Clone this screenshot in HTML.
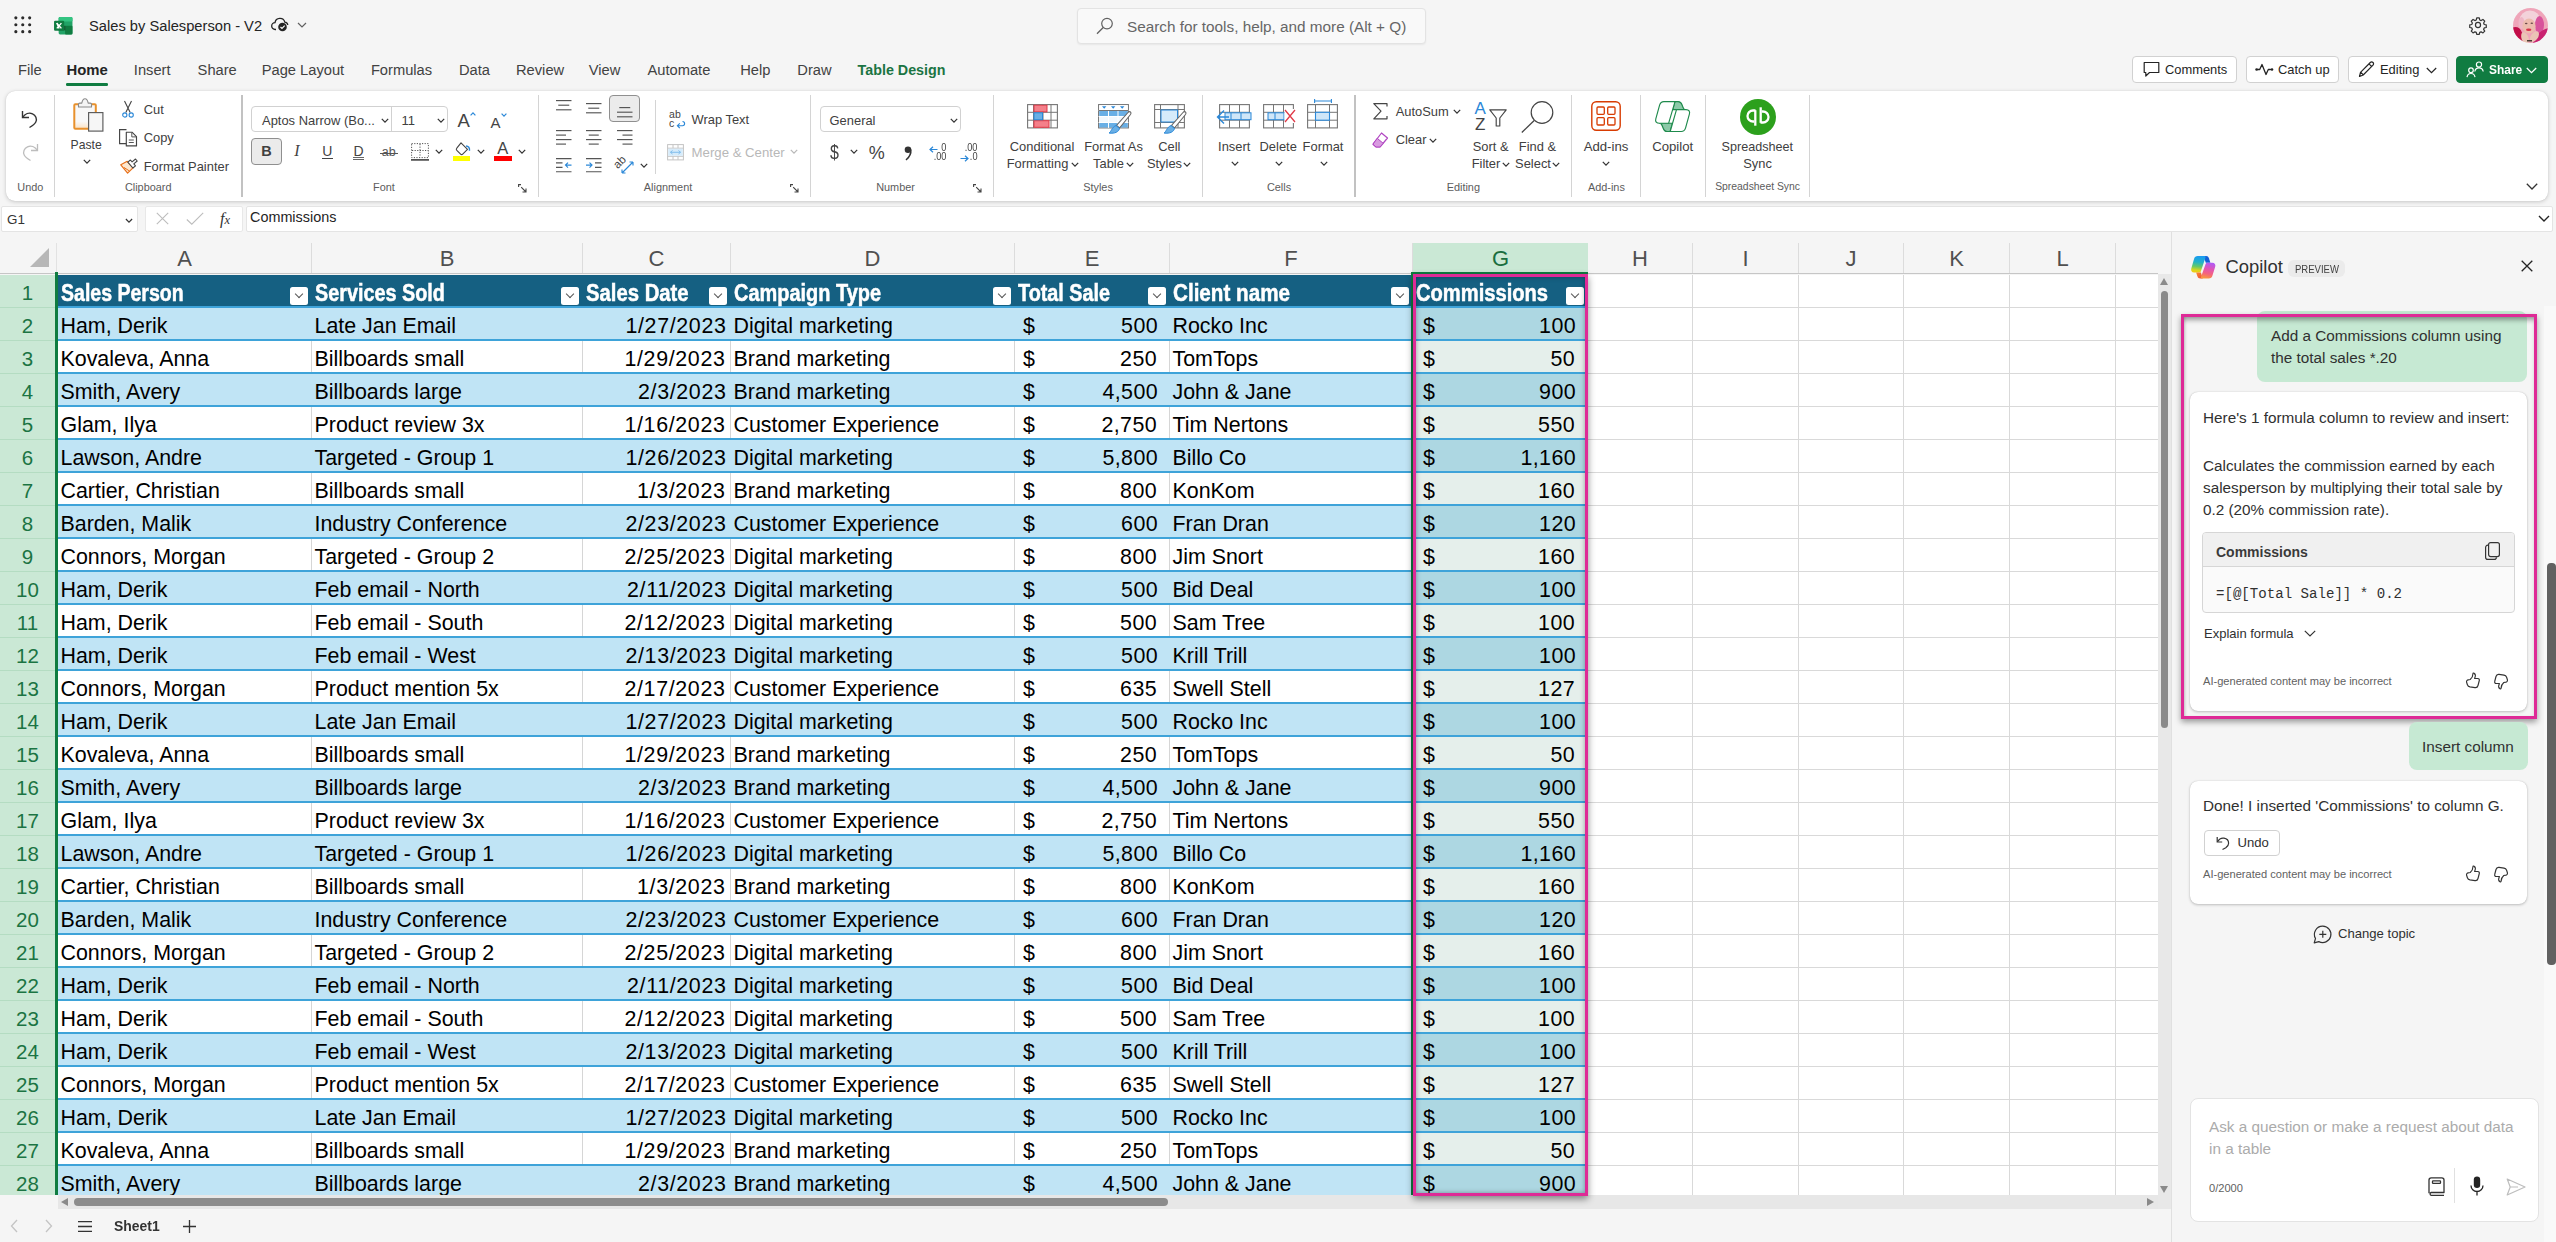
<!DOCTYPE html>
<html><head><meta charset="utf-8"><title>Sales by Salesperson - V2</title>
<style>
*{box-sizing:border-box;margin:0;padding:0}
html,body{width:2556px;height:1242px;overflow:hidden;background:#f5f5f5;font-family:"Liberation Sans",sans-serif;color:#242424}
body{position:relative}
.abs{position:absolute}
svg{display:block;overflow:visible}
/* ---------- grid ---------- */
#grid{position:absolute;left:0;top:243px;width:2172px;height:952px;overflow:hidden}
.colhdr{position:absolute;left:0;top:0;width:2158px;height:31px;border-bottom:1px solid #c6c6c6;background:#f5f5f5}
.ch{position:absolute;top:0;height:30px;line-height:32px;text-align:center;font-size:22px;color:#505050;border-right:1px solid #dcdcdc}
.ch.sel{background:#cae8d5;color:#1a6e3f;border-right:0;border-bottom:2px solid #107c41;height:31px}
.corner{position:absolute;left:30px;top:5px;width:0;height:0;border-left:19px solid transparent;border-bottom:19px solid #b7b7b7}
.corner:after{content:"";position:absolute;left:7px;top:-8px;width:1px;height:33px;background:#e2e2e2}
.rowhdr{position:absolute;left:0;top:32px;width:58px;height:920px;background:#cae8d5}
.rowhdr:after{content:"";position:absolute;left:55px;top:-3px;width:3px;height:923px;background:#107c41}
.rh{position:absolute;left:0;width:55px;height:33px;line-height:36px;text-align:center;font-size:20.500px;color:#1b7443;border-bottom:1px solid #b4dcc2}
.sheet{position:absolute;left:58px;top:32px;width:2100px;height:920px;background:#fff}
.hl{position:absolute;left:1530px;width:570px;height:1px;background:#d9d9d9}
.vl{position:absolute;top:0;width:1px;height:920px;background:#d9d9d9}
.th{position:absolute;top:0;height:33px;background:#156082;border-bottom:2px solid #3ea3d9;color:#fff;font-weight:bold;font-size:23.5px;line-height:36px;padding-left:2.500px;white-space:nowrap}
.th span{display:inline-block;-webkit-text-stroke:.5px #fff;transform-origin:0 50%}
.fb{position:absolute;right:4px;top:11.500px;width:18px;height:18px;background:#fff;border-radius:2.500px}
.fb:after{content:"";position:absolute;left:6.200px;top:4.300px;width:5px;height:5px;border-right:1.200px solid #555;border-bottom:1.200px solid #555;transform:rotate(45deg)}
.tr{position:absolute;left:0;width:1530px;height:33px;border-bottom:2px solid #3ea3d9}
.tr.b{background:#c0e4f5}
.tr.w{background:#fff}
.td{position:absolute;top:0;height:31px;line-height:36px;font-size:21.4px;color:#000;padding:0 4px 0 2.500px;white-space:nowrap;overflow:hidden}
.tr.w .td{border-right:1px solid #d6d6d6}
.td.r{text-align:right;padding-right:4.500px;letter-spacing:.65px !important}
.td.cur{text-align:right;padding-right:12px}
.td.cur em{font-style:normal;position:absolute;left:8px;top:0}
.td.r,.td.cur span{letter-spacing:.4px}
/* selection on G */
.gsel{position:absolute;left:1353px;top:-3px;width:2px;height:925px;background:#107c41}
.pinkcol{position:absolute;left:1413px;top:274px;width:175px;height:922px;border:3px solid #de2a96;box-shadow:0 3px 7px rgba(0,0,0,.45), inset 0 0 5px rgba(0,0,0,.35)}
.tr .td.g{background:rgba(40,120,90,.12)}
.td.g em{left:10px !important}
</style></head><body>
<!-- titlebar -->
<div class="abs" style="left:0;top:0;width:2556px;height:50px">
 <svg class="abs" style="left:14px;top:16px" width="17.500" height="17.500" viewBox="0 0 19 19" fill="#2b2b2b">
  <circle cx="2" cy="2" r="1.7"/><circle cx="9.5" cy="2" r="1.7"/><circle cx="17" cy="2" r="1.7"/>
  <circle cx="2" cy="9.5" r="1.7"/><circle cx="9.5" cy="9.5" r="1.7"/><circle cx="17" cy="9.5" r="1.7"/>
  <circle cx="2" cy="17" r="1.7"/><circle cx="9.5" cy="17" r="1.7"/><circle cx="17" cy="17" r="1.7"/>
 </svg>
 <svg class="abs" style="left:54px;top:16.500px" width="18.500" height="17.500" viewBox="0 0 20 19">
  <rect x="5" y="0" width="15" height="19" rx="1.5" fill="#21a366"/>
  <rect x="5" y="0" width="15" height="5" rx="1.5" fill="#33c481"/>
  <rect x="12" y="9.5" width="8" height="9.5" rx="1" fill="#107c41"/>
  <rect x="5" y="9.5" width="7.5" height="5" fill="#185c37"/>
  <rect x="0" y="4" width="11" height="11" rx="1.2" fill="#107c41"/>
  <path d="M3 6.6 L5.5 12.4 M8 6.6 L3 12.4 M5.5 6.6" stroke="#fff" stroke-width="1.5" fill="none"/>
  <path d="M3 6.6 L8 12.4" stroke="#fff" stroke-width="1.5"/>
 </svg>
 <div class="abs" style="left:89px;top:16px;font-size:14.700px;line-height:20px;color:#242424;white-space:nowrap">Sales by Salesperson - V2</div>
 <svg class="abs" style="left:271px;top:17px" width="18" height="15" viewBox="0 0 18 15" fill="none">
  <path d="M5 12.5H4.2A3.4 3.4 0 0 1 4 5.7 5 5 0 0 1 13.8 5.2 3.3 3.3 0 0 1 16.8 8" stroke="#242424" stroke-width="1.3"/>
  <circle cx="11.5" cy="10" r="4.3" fill="#242424"/>
  <path d="M9.5 10l1.5 1.5 2.7-2.8" stroke="#fff" stroke-width="1.2"/>
 </svg>
 <svg class="abs" style="left:297px;top:22px" width="10" height="7" viewBox="0 0 10 7" fill="none"><path d="M1 1l4 4 4-4" stroke="#616161" stroke-width="1.2"/></svg>
 <!-- search -->
 <div class="abs" style="left:1077px;top:8px;width:349px;height:36px;border:1px solid #e3e3e3;border-radius:4px;background:#f9f9f9;box-shadow:0 1px 2px rgba(0,0,0,.06)"></div>
 <svg class="abs" style="left:1096px;top:17px" width="18" height="18" viewBox="0 0 18 18" fill="none"><circle cx="11" cy="6.6" r="5.3" stroke="#616161" stroke-width="1.2"/><path d="M7.2 10.5L1 16.8" stroke="#616161" stroke-width="1.3"/></svg>
 <div class="abs" style="left:1127px;top:16.500px;font-size:15.300px;line-height:20px;color:#666;white-space:nowrap">Search for tools, help, and more (Alt + Q)</div>
 <!-- gear -->
 <svg class="abs" style="left:2469px;top:16px" width="18" height="18" viewBox="0 0 24 24" fill="none" stroke="#333" stroke-width="1.600"><circle cx="12" cy="12" r="3.4"/><path d="M10.3 2.6h3.4l.6 2.7 1.9.8 2.4-1.5 2.4 2.4-1.5 2.4.8 1.9 2.7.6v3.4l-2.7.6-.8 1.9 1.5 2.4-2.4 2.4-2.4-1.5-1.9.8-.6 2.7h-3.4l-.6-2.7-1.9-.8-2.4 1.5-2.4-2.4 1.5-2.4-.8-1.9-2.7-.6v-3.4l2.7-.6.8-1.9L3 7l2.4-2.4 2.4 1.5 1.9-.8z" stroke-linejoin="round"/></svg>
 <!-- avatar -->
 <svg class="abs" style="left:2513px;top:8px" width="35" height="35" viewBox="0 0 35 35">
  <defs><clipPath id="avc"><circle cx="17.500" cy="17.500" r="17.500"/></clipPath><filter id="avb" x="-10%" y="-10%" width="120%" height="120%"><feGaussianBlur stdDeviation=".55"/></filter></defs>
  <g clip-path="url(#avc)"><g filter="url(#avb)">
   <rect x="-2" y="-2" width="39" height="39" fill="#efa5b9"/>
   <ellipse cx="17" cy="12.500" rx="10.500" ry="10" fill="#f3d2da"/>
   <ellipse cx="26.500" cy="17" rx="4.500" ry="9" fill="#d8529b"/>
   <ellipse cx="8.500" cy="15" rx="3" ry="6" fill="#eeb6c6"/>
   <path d="M-1 19.500c5-1.500 8 0 10 5l5 12H-1z" fill="#c21149"/>
   <path d="M36 20c-5 1-10 4-13 8l-4 9h17z" fill="#c9236f"/>
   <ellipse cx="16" cy="18" rx="6.600" ry="7.600" fill="#ecbcae"/>
   <ellipse cx="12" cy="30" rx="3.500" ry="6" fill="#ebc4b5" transform="rotate(-20 12 30)"/>
   <ellipse cx="21.500" cy="28.500" rx="3.500" ry="6" fill="#ebc4b5" transform="rotate(35 21.500 28.500)"/>
   <ellipse cx="13.200" cy="15.500" rx="1.300" ry=".7" fill="#6b4a4a"/><ellipse cx="18.800" cy="15.300" rx="1.300" ry=".7" fill="#6b4a4a"/>
   <ellipse cx="15.700" cy="21.800" rx="2.700" ry="1.300" fill="#d9304a"/>
   <rect x="14" y="32" width="5" height="1.500" fill="#4a3a30"/>
  </g></g>
 </svg>
</div>
<!-- tabs -->
<style>.tab{position:absolute;top:60px;font-size:14.7px;line-height:20px;color:#424242;white-space:nowrap}
.tbtn{position:absolute;top:56px;height:27px;border:1px solid #d1d1d1;border-radius:4px;background:#fff;font-size:12.9px;line-height:25px;color:#242424;white-space:nowrap}
.tbtn span{position:absolute;top:0}</style>
<div class="tab" style="left:18px">File</div>
<div class="tab" style="left:66.5px;font-weight:bold;color:#242424;font-size:14.9px">Home</div>
<div class="tab" style="left:133.8px">Insert</div>
<div class="tab" style="left:197.6px">Share</div>
<div class="tab" style="left:261.7px">Page Layout</div>
<div class="tab" style="left:370.9px">Formulas</div>
<div class="tab" style="left:458.9px">Data</div>
<div class="tab" style="left:516px">Review</div>
<div class="tab" style="left:588.8px">View</div>
<div class="tab" style="left:647.5px">Automate</div>
<div class="tab" style="left:740.2px">Help</div>
<div class="tab" style="left:797.3px">Draw</div>
<div class="tab" style="left:857.6px;font-weight:bold;color:#1b7443;font-size:14.3px">Table Design</div>
<div class="abs" style="left:66px;top:83px;width:42px;height:2.500px;border-radius:1.250px;background:#107c41"></div>
<div class="tbtn" style="left:2132px;width:105px">
 <svg class="abs" style="left:10px;top:4px" width="17" height="17" viewBox="0 0 17 17" fill="none"><path d="M1.2 1.5h14.6v10H6.5L2.8 15v-3.5H1.2z" stroke="#242424" stroke-width="1.2" stroke-linejoin="round"/></svg>
 <span style="left:32px">Comments</span></div>
<div class="tbtn" style="left:2246px;width:93px">
 <svg class="abs" style="left:8px;top:5px" width="19" height="15" viewBox="0 0 19 15" fill="none"><path d="M2.5 7.5h2.2L7 2.5l4 10 2.3-5h2.2" stroke="#242424" stroke-width="1.3" stroke-linejoin="round" stroke-linecap="round"/><circle cx="1.6" cy="7.5" r="1.3" fill="#242424"/><circle cx="17" cy="7.5" r="1.3" fill="#242424"/></svg>
 <span style="left:31px">Catch up</span></div>
<div class="tbtn" style="left:2348px;width:100px">
 <svg class="abs" style="left:9px;top:4px" width="17" height="17" viewBox="0 0 17 17" fill="none"><path d="M1.5 15.5l1-4.2L12.3 1.5a1.9 1.9 0 0 1 2.7 2.7L5.2 14z M2.6 11.2l3 3 M11 2.8l2.8 2.8" stroke="#242424" stroke-width="1.2" stroke-linejoin="round"/></svg>
 <span style="left:31px">Editing</span>
 <svg class="abs" style="left:77px;top:10px" width="11" height="7" viewBox="0 0 11 7" fill="none"><path d="M.8 1l4.7 4.6L10.2 1" stroke="#242424" stroke-width="1.2"/></svg></div>
<div class="tbtn" style="left:2456px;width:92px;background:#107c41;border-color:#107c41;color:#fff;font-weight:bold">
 <svg class="abs" style="left:9px;top:4px" width="19" height="17" viewBox="0 0 19 17" fill="none" stroke="#fff" stroke-width="1.2"><circle cx="13" cy="3.6" r="2.6"/><path d="M8.8 10.5c.4-2.3 2-3.6 4.2-3.6s3.800 1.300 4.200 3.600"/><circle cx="5" cy="9.200" r="2.300"/><path d="M1 16.200c.3-2.300 1.900-3.700 4-3.700s3.700 1.400 4 3.700"/></svg>
 <span style="left:32px;font-size:13.300px;transform:scaleX(.9);transform-origin:0 50%">Share</span>
 <svg class="abs" style="left:69px;top:10px" width="11" height="7" viewBox="0 0 11 7" fill="none"><path d="M.8 1l4.700 4.600L10.200 1" stroke="#fff" stroke-width="1.300"/></svg></div>
<!-- ribbon -->
<style>
#rb{position:absolute;left:6px;top:91px;width:2542px;height:110px;background:#fff;border-radius:9px;box-shadow:0 1px 4px rgba(0,0,0,.18),0 0 1px rgba(0,0,0,.15)}
.rt{position:absolute;white-space:nowrap;font-size:12.9px;line-height:16px;color:#404040}
.rc{position:absolute;white-space:nowrap;font-size:12.9px;line-height:16px;color:#404040;transform:translateX(-50%)}
.rl{position:absolute;white-space:nowrap;font-size:10.9px;line-height:14px;color:#5c5c5c;transform:translateX(-50%);top:180px}
.sep{position:absolute;top:95px;width:1px;height:102px;background:#d4d4d4}
.sep.d{width:2px;background:#c2c2c2}
.ic{position:absolute}
.cv{position:absolute;width:8px;height:5px}
</style>
<div id="rb"></div>
<svg class="ic" style="left:21px;top:110px" width="17" height="18" viewBox="0 0 17 18" fill="none"><path d="M1.500 1v6.500H8" stroke="#333" stroke-width="1.400"/><path d="M1.800 7.200C4 3.800 8 2.300 11.500 3.800c3.200 1.400 4.800 5 3.300 8.200-.8 1.700-2.600 3.300-6.300 5.500" stroke="#333" stroke-width="1.400"/></svg>
<svg class="ic" style="left:22px;top:143px" width="17" height="18" viewBox="0 0 17 18" fill="none"><g transform="translate(17 0) scale(-1 1)"><path d="M1.500 1v6.500H8" stroke="#bdbdbd" stroke-width="1.300"/><path d="M1.800 7.200C4 3.800 8 2.300 11.500 3.800c3.200 1.400 4.800 5 3.300 8.200-.8 1.700-2.600 3.300-6.300 5.500" stroke="#bdbdbd" stroke-width="1.300"/></g></svg>
<div class="rl" style="left:30.3px">Undo</div>
<div class="sep" style="left:54px"></div>
<svg class="ic" style="left:73px;top:97.5px" width="31" height="34" viewBox="0 0 31 34" fill="none"><defs><linearGradient id="pg" x1="0" y1="0" x2="0" y2="1"><stop offset="0" stop-color="#f8f8f8"/><stop offset=".7" stop-color="#f8f8f8"/><stop offset="1" stop-color="#fbe2c3"/></linearGradient></defs>
<rect x="1.300" y="6.300" width="21.500" height="24.500" rx="1" fill="url(#pg)" stroke="#e8912d" stroke-width="2"/>
<path d="M5.500 9V6.300c0-.8.500-1.200 1.200-1.200h2.100c.3-1.600 1.500-4.300 3.200-4.300s2.900 2.700 3.200 4.300h2.100c.7 0 1.200.400 1.200 1.200V9z" fill="#f4f4f4" stroke="#8a8a8a" stroke-width="1.100" stroke-linejoin="round"/>
<rect x="15.600" y="14.600" width="14.300" height="18.500" fill="#f6f6f6" stroke="#5a5a5a" stroke-width="1.150"/></svg>
<div class="rc" style="left:86.2px;top:136.6px;font-size:12.200px">Paste</div>
<svg class="ic" style="left:83.0px;top:159.0px" width="8" height="5.5" viewBox="0 0 8 5.5" fill="none"><path d="M.8.9L4 4.2 7.200.9" stroke="#333" stroke-width="1.250"/></svg>
<svg class="ic" style="left:122px;top:101px" width="12" height="17" viewBox="0 0 12 17" fill="none"><path d="M2.500 0l5.700 11.500M9.500 0L3.800 11.500" stroke="#444" stroke-width="1.100"/><circle cx="2.800" cy="14" r="2.100" stroke="#2b88d8" stroke-width="1.100"/><circle cx="9.200" cy="14" r="2.100" stroke="#2b88d8" stroke-width="1.100"/></svg>
<div class="rt" style="left:143.7px;top:101.5px">Cut</div>
<svg class="ic" style="left:119px;top:129px" width="18.5" height="17.5" viewBox="0 0 18.5 17.5" fill="none"><path d="M7.500 .600H.600v14h6.500" stroke="#444" stroke-width="1.150"/><path d="M7.300 3.200h5.700l4.500 4.500v9.200H7.300z" fill="#fff" stroke="#444" stroke-width="1.150" stroke-linejoin="round"/><path d="M12.800 3.400v4.500h4.500M9.800 11h5M9.800 13.500h5" stroke="#555" stroke-width="1"/></svg>
<div class="rt" style="left:143.7px;top:130px">Copy</div>
<svg class="ic" style="left:119.5px;top:157px" width="18" height="17" viewBox="0 0 18 17" fill="none"><path d="M.800 7.800L7.200 4.300l5.800 6.500-5.400 5.400z" fill="#fde7cf" stroke="#e8701a" stroke-width="1.200" stroke-linejoin="round"/><path d="M4 10.500l5.500 3.500" stroke="#e8701a" stroke-width="1"/><path d="M7.800 5.200l2.600-2.200 1.700 1.900 3.400-2.900 1.700 2-3.400 2.900 1.700 1.900-2.600 2.200z" fill="#fff" stroke="#444" stroke-width="1.100" stroke-linejoin="round"/></svg>
<div class="rt" style="left:143.7px;top:158.6px">Format Painter</div>
<div class="rl" style="left:148.2px">Clipboard</div>
<div class="sep d" style="left:241px"></div>
<div class="abs" style="left:251px;top:106px;width:197px;height:26px;border:1px solid #d1d1d1;border-radius:4px;background:#fff"></div>
<div class="abs" style="left:391px;top:107px;width:1px;height:24px;background:#d1d1d1"></div>
<div class="rt" style="left:262px;top:112.5px;font-size:12.950px">Aptos Narrow (Bo...</div>
<svg class="ic" style="left:380.8px;top:118.2px" width="8" height="5.5" viewBox="0 0 8 5.5" fill="none"><path d="M.8.9L4 4.2 7.200.9" stroke="#333" stroke-width="1.250"/></svg>
<div class="rt" style="left:401.4px;top:112.5px;font-size:13px">11</div>
<svg class="ic" style="left:436.8px;top:118.2px" width="8" height="5.5" viewBox="0 0 8 5.5" fill="none"><path d="M.8.9L4 4.2 7.200.9" stroke="#333" stroke-width="1.250"/></svg>
<div class="rt" style="left:457.5px;top:112px;font-size:18.500px;line-height:24px;top:108.500px;color:#444">A</div>
<svg class="ic" style="left:470px;top:112px" width="6" height="4" viewBox="0 0 6 4" fill="none"><path d="M.6 3.300L3 .8l2.400 2.500" stroke="#2b88d8" stroke-width="1.200"/></svg>
<div class="rt" style="left:490.5px;top:114px;font-size:15px;line-height:20px;top:113px;color:#444">A</div>
<svg class="ic" style="left:500.5px;top:113px" width="6" height="4" viewBox="0 0 6 4" fill="none"><path d="M.6.700L3 3.200 5.400.700" stroke="#2b88d8" stroke-width="1.200"/></svg>
<div class="abs" style="left:251px;top:138px;width:31px;height:27px;border:1px solid #8f8f8f;border-radius:4px;background:#ebebeb"></div>
<div class="rc" style="left:266.6px;top:143.4px;font-weight:bold;font-size:14.500px">B</div>
<div class="rc" style="left:297px;top:143.4px;font-family:'Liberation Serif',serif;font-style:italic;font-size:16px;color:#444">I</div>
<div class="rc" style="left:327.3px;top:142.8px;font-size:14px;color:#444">U</div>
<div class="abs" style="left:322px;top:157.500px;width:10.500px;height:1.300px;background:#444"></div>
<div class="rc" style="left:358.5px;top:142.8px;font-size:14px;color:#444">D</div>
<div class="abs" style="left:353px;top:157px;width:11px;height:3.400px;border-top:1.100px solid #666;border-bottom:1.100px solid #666"></div>
<div class="rc" style="left:388.7px;top:143.6px;font-size:12.500px;color:#555">ab</div>
<div class="abs" style="left:380px;top:153px;width:17.500px;height:1.100px;background:#555"></div>
<svg class="ic" style="left:411px;top:143px" width="18" height="18" viewBox="0 0 18 18" fill="none"><path d="M.6.600h16.800v14H.6z" stroke="#555" stroke-width="1" stroke-dasharray="1.200 1.400"/><path d="M9 1v13M1 7.500h16" stroke="#555" stroke-width="1" stroke-dasharray="1.200 1.400"/><path d="M0 16.900h18" stroke="#333" stroke-width="1.500"/></svg>
<svg class="ic" style="left:435.0px;top:149.3px" width="8" height="5.5" viewBox="0 0 8 5.5" fill="none"><path d="M.8.9L4 4.2 7.200.9" stroke="#333" stroke-width="1.250"/></svg>
<svg class="ic" style="left:454px;top:142px" width="17" height="13" viewBox="0 0 17 13" fill="none"><path d="M7 .800l6.500 6.500-4.800 4.800a1.500 1.500 0 0 1-2.100 0L2.800 8.300a1.500 1.500 0 0 1 0-2.100z" fill="#fff" stroke="#444" stroke-width="1.100" stroke-linejoin="round"/><path d="M12 4c2.500 0 3.800 1.800 3.500 4.800" stroke="#2b88d8" stroke-width="1.400"/></svg>
<div class="abs" style="left:453px;top:156px;width:17px;height:4.500px;background:#ffff00"></div>
<svg class="ic" style="left:477.0px;top:149.3px" width="8" height="5.5" viewBox="0 0 8 5.5" fill="none"><path d="M.8.9L4 4.2 7.200.9" stroke="#333" stroke-width="1.250"/></svg>
<div class="rc" style="left:502.8px;top:139.5px;font-size:16.500px;color:#444">A</div>
<div class="abs" style="left:494px;top:156px;width:18px;height:4.500px;background:#ff0000"></div>
<svg class="ic" style="left:518.0px;top:149.3px" width="8" height="5.5" viewBox="0 0 8 5.5" fill="none"><path d="M.8.9L4 4.2 7.200.9" stroke="#333" stroke-width="1.250"/></svg>
<div class="rl" style="left:384px">Font</div>
<svg class="ic" style="left:518px;top:184px" width="9" height="9" viewBox="0 0 9 9" fill="none"><path d="M.6 3V.6H3M3.200 3.200L8 8M8 4.500V8H4.500" stroke="#444" stroke-width="1.100"/></svg>
<div class="sep" style="left:538px"></div>
<svg class="ic" style="left:556px;top:99.5px" width="15.5" height="14.799999999999999" viewBox="0 0 15.5 14.799999999999999" fill="none"><path d="M0.0 0.6h15.5" stroke="#555" stroke-width="1.150"/><path d="M2.25 5.199999999999999h11" stroke="#555" stroke-width="1.150"/><path d="M0.0 9.799999999999999h15.5" stroke="#555" stroke-width="1.150"/></svg>
<svg class="ic" style="left:586px;top:102.5px" width="15.5" height="14.799999999999999" viewBox="0 0 15.5 14.799999999999999" fill="none"><path d="M0.0 0.6h15.5" stroke="#555" stroke-width="1.150"/><path d="M2.25 5.199999999999999h11" stroke="#555" stroke-width="1.150"/><path d="M0.0 9.799999999999999h15.5" stroke="#555" stroke-width="1.150"/></svg>
<div class="abs" style="left:609px;top:95px;width:31px;height:27px;border:1px solid #8f8f8f;border-radius:4px;background:#ebebeb"></div>
<svg class="ic" style="left:617px;top:107px" width="15.5" height="14.799999999999999" viewBox="0 0 15.5 14.799999999999999" fill="none"><path d="M2.25 0.6h11" stroke="#555" stroke-width="1.150"/><path d="M0.0 5.199999999999999h15.5" stroke="#555" stroke-width="1.150"/><path d="M0.0 9.799999999999999h15.5" stroke="#555" stroke-width="1.150"/></svg>
<svg class="ic" style="left:556px;top:129.5px" width="15.5" height="19.0" viewBox="0 0 15.5 19.0" fill="none"><path d="M0 0.6h15.5" stroke="#555" stroke-width="1.150"/><path d="M0 5.1h10" stroke="#555" stroke-width="1.150"/><path d="M0 9.6h15.5" stroke="#555" stroke-width="1.150"/><path d="M0 14.1h10" stroke="#555" stroke-width="1.150"/></svg>
<svg class="ic" style="left:586px;top:129.5px" width="15.5" height="19.0" viewBox="0 0 15.5 19.0" fill="none"><path d="M0.0 0.6h15.5" stroke="#555" stroke-width="1.150"/><path d="M2.75 5.1h10" stroke="#555" stroke-width="1.150"/><path d="M0.0 9.6h15.5" stroke="#555" stroke-width="1.150"/><path d="M2.75 14.1h10" stroke="#555" stroke-width="1.150"/></svg>
<svg class="ic" style="left:616.5px;top:129.5px" width="15.5" height="19.0" viewBox="0 0 15.5 19.0" fill="none"><path d="M0.0 0.6h15.5" stroke="#555" stroke-width="1.150"/><path d="M5.5 5.1h10" stroke="#555" stroke-width="1.150"/><path d="M0.0 9.6h15.5" stroke="#555" stroke-width="1.150"/><path d="M5.5 14.1h10" stroke="#555" stroke-width="1.150"/></svg>
<svg class="ic" style="left:556px;top:157.5px" width="16" height="15" viewBox="0 0 16 15" fill="none"><path d="M0 .600h15.500M0 13.700h15.500M0 4.900h6.500M0 9.300h6.500" stroke="#555" stroke-width="1.150"/><path d="M15.500 7.100H9.500M12 4.600L9.500 7.100 12 9.600" stroke="#2b88d8" stroke-width="1.150"/></svg>
<svg class="ic" style="left:586px;top:157.5px" width="16" height="15" viewBox="0 0 16 15" fill="none"><path d="M0 .600h15.500M0 13.700h15.500M9 4.900h6.500M9 9.300h6.500" stroke="#555" stroke-width="1.150"/><path d="M0 7.100h6M3.500 4.600L6 7.100 3.500 9.600" stroke="#2b88d8" stroke-width="1.150"/></svg>
<div class="abs" style="left:613px;top:156px;font-size:11.500px;line-height:12px;color:#444;transform:rotate(-45deg)">ab</div>
<svg class="ic" style="left:620px;top:160px" width="15" height="15" viewBox="0 0 15 15" fill="none"><path d="M2 13L13 2M13 2v3.500M13 2H9.500M2 13h3.500M2 13V9.500" stroke="#2b88d8" stroke-width="1.150"/></svg>
<svg class="ic" style="left:639.7px;top:163.2px" width="8" height="5.5" viewBox="0 0 8 5.5" fill="none"><path d="M.8.9L4 4.2 7.200.9" stroke="#333" stroke-width="1.250"/></svg>
<div class="sep" style="left:655px;top:100px;height:74px"></div>
<div class="abs" style="left:669px;top:110px;font-size:10.500px;line-height:8.500px;color:#444;letter-spacing:.2px">ab<br>c</div>
<svg class="ic" style="left:676px;top:121px" width="10" height="7.5" viewBox="0 0 10 7.5" fill="none"><path d="M1.500 4.200h5a2.100 2.100 0 0 0 0-4.200M3.800 1.800L1.400 4.200l2.400 2.400" stroke="#2b88d8" stroke-width="1.150" transform="translate(0 .500)"/></svg>
<div class="rt" style="left:691.6px;top:111.7px">Wrap Text</div>
<svg class="ic" style="left:667px;top:143.5px" width="17" height="16.5" viewBox="0 0 17 16.5" fill="none"><rect x=".6" y=".6" width="15.800" height="15.300" stroke="#c4c4c4" stroke-width="1"/><path d="M.6 4.200h15.800M.6 12.300h15.800M6 .6v3.600M11 .6v3.600M6 12.300v3.600M11 12.300v3.600" stroke="#c4c4c4" stroke-width="1"/><rect x="1.200" y="4.700" width="14.600" height="7.100" fill="#d6ebfa"/><path d="M3.500 8.250h10M5.500 6.500L3.500 8.250l2 1.750M11.500 6.500l2 1.750-2 1.750" stroke="#7ebcec" stroke-width="1"/></svg>
<div class="rt" style="left:691.6px;top:145px;color:#b8b8b8;font-size:13.200px">Merge &amp; Center</div>
<svg class="ic" style="left:790.0px;top:149.0px" width="8" height="5.5" viewBox="0 0 8 5.5" fill="none"><path d="M.8.9L4 4.2 7.200.9" stroke="#b8b8b8" stroke-width="1.250"/></svg>
<div class="rl" style="left:668px">Alignment</div>
<svg class="ic" style="left:790px;top:184px" width="9" height="9" viewBox="0 0 9 9" fill="none"><path d="M.6 3V.6H3M3.200 3.200L8 8M8 4.500V8H4.500" stroke="#444" stroke-width="1.100"/></svg>
<div class="sep" style="left:810px"></div>
<div class="abs" style="left:820px;top:106px;width:141px;height:26px;border:1px solid #d1d1d1;border-radius:4px;background:#fff"></div>
<div class="rt" style="left:829.6px;top:112.5px">General</div>
<svg class="ic" style="left:949.6px;top:118.2px" width="8" height="5.5" viewBox="0 0 8 5.5" fill="none"><path d="M.8.9L4 4.2 7.200.9" stroke="#333" stroke-width="1.250"/></svg>
<div class="rt" style="left:829.500px;top:141px;font-size:20.500px;line-height:22px;color:#444;transform:scaleX(.78);transform-origin:0 50%">$</div>
<svg class="ic" style="left:849.9px;top:149.3px" width="8" height="5.5" viewBox="0 0 8 5.5" fill="none"><path d="M.8.9L4 4.2 7.200.9" stroke="#333" stroke-width="1.250"/></svg>
<div class="rc" style="left:876.8px;top:144px;font-size:18px;line-height:20px;top:142.500px;color:#444">%</div>
<svg class="ic" style="left:903.5px;top:145.5px" width="8" height="15" viewBox="0 0 8 15" fill="none"><circle cx="4" cy="3.700" r="3.300" fill="#333"/><path d="M6.800 3.500c.5 4-1.300 7.500-4.800 10.500" stroke="#333" stroke-width="1.500"/></svg>
<div class="abs" style="left:925px;top:142.500px;font-size:11.500px;line-height:9.300px;color:#444;text-align:right;width:21.500px;transform:scaleX(.8);transform-origin:100% 50%">0<br>.00</div>
<svg class="ic" style="left:929px;top:145.5px" width="9" height="7" viewBox="0 0 9 7" fill="none"><path d="M8.500 3.500H1M4 .700L1 3.500l3 2.800" stroke="#2b88d8" stroke-width="1.200"/></svg>
<div class="abs" style="left:956px;top:142.500px;font-size:11.500px;line-height:9.300px;color:#444;text-align:right;width:21.500px;transform:scaleX(.8);transform-origin:100% 50%">.00<br>.0</div>
<svg class="ic" style="left:960px;top:154.5px" width="9" height="7" viewBox="0 0 9 7" fill="none"><path d="M.5 3.500H8M5 .700l3 2.800-3 2.800" stroke="#2b88d8" stroke-width="1.200"/></svg>
<div class="rl" style="left:895.5px">Number</div>
<svg class="ic" style="left:973px;top:184px" width="9" height="9" viewBox="0 0 9 9" fill="none"><path d="M.6 3V.6H3M3.200 3.200L8 8M8 4.500V8H4.500" stroke="#444" stroke-width="1.100"/></svg>
<div class="sep" style="left:993px"></div>
<svg class="ic" style="left:1027px;top:104.0px" width="31" height="24.5" viewBox="0 0 31 24.5" fill="none"><rect x=".6" y=".6" width="29.800" height="23.300" fill="#fff" stroke="#767676" stroke-width="1.100"/><path d="M6.500 .6v23.300M16 .6v23.300M24 .6v23.300M.6 8.300h29.800M.6 16.200h29.800" stroke="#767676" stroke-width="1"/><rect x="7" y="1.200" width="13" height="6.600" fill="#f4808a" stroke="#e03a48" stroke-width="1"/><rect x="7" y="16.700" width="15" height="6.600" fill="#f4808a" stroke="#e03a48" stroke-width="1"/><rect x="7" y="8.800" width="8.500" height="6.900" fill="#69afe5" stroke="#2b88d8" stroke-width="1"/></svg>
<div class="rc" style="left:1042px;top:138.7px">Conditional</div>
<div class="rc" style="left:1037.5px;top:155.6px">Formatting</div>
<svg class="ic" style="left:1071.0px;top:162.0px" width="8" height="5.5" viewBox="0 0 8 5.5" fill="none"><path d="M.8.9L4 4.2 7.200.9" stroke="#333" stroke-width="1.250"/></svg>
<svg class="ic" style="left:1098px;top:104.0px" width="31" height="24.5" viewBox="0 0 31 24.5" fill="none"><rect x=".6" y=".6" width="29.800" height="23.300" fill="#fff" stroke="#767676" stroke-width="1.100"/><rect x="1.200" y="1.200" width="28.600" height="5" fill="#fff"/><path d="M4 2.200h4.400L6.200 4.800zM13 2.200h4.400L15.200 4.800zM22 2.200h4.400L24.200 4.800z" fill="#2b88d8"/><rect x="1.200" y="7" width="28.600" height="5" fill="#69afe5"/><rect x="1.200" y="13" width="28.600" height="5" fill="#f2f8fd"/><rect x="1.200" y="19" width="28.600" height="4.500" fill="#69afe5"/><path d="M10.500 6.500v17.400M20 6.500v17.400M.6 6.500h29.800M.6 12.500h29.800M.6 18.500h29.800" stroke="#fff" stroke-width="1"/><path d="M.6 6.500h29.800" stroke="#767676" stroke-width="1"/></svg>
<svg class="ic" style="left:1106px;top:111px" width="26" height="23" viewBox="0 0 26 23" fill="none"><path d="M24.500 1c.8.700.6 1.600 0 2.500L13.500 17l-3-2.500L22 1.500c.8-.900 1.700-1.100 2.500-.500z" fill="#fff" stroke="#666" stroke-width="1.100"/><path d="M10 14.500l3.500 3c-.5 3-4.500 5.500-10.500 4.500 2.500-1.500 2.500-5.500 7-7.500z" fill="#69afe5" stroke="#2b88d8" stroke-width="1"/></svg>
<div class="rc" style="left:1113.5px;top:138.7px">Format As</div>
<div class="rc" style="left:1108.5px;top:155.6px">Table</div>
<svg class="ic" style="left:1125.5px;top:162.0px" width="8" height="5.5" viewBox="0 0 8 5.5" fill="none"><path d="M.8.9L4 4.2 7.200.9" stroke="#333" stroke-width="1.250"/></svg>
<svg class="ic" style="left:1153.5px;top:104.0px" width="31" height="24.5" viewBox="0 0 31 24.5" fill="none"><rect x=".6" y=".6" width="29.800" height="23.300" fill="#fff" stroke="#767676" stroke-width="1.100"/><path d="M6.500 .6v23.300M.6 5.500h29.800M.6 18.500h29.800M24 .6v23.300" stroke="#767676" stroke-width="1"/><rect x="7" y="6" width="16.500" height="12" fill="#d6ebfa" stroke="#2b88d8" stroke-width="1"/></svg>
<svg class="ic" style="left:1160.5px;top:111px" width="26" height="23" viewBox="0 0 26 23" fill="none"><path d="M24.500 1c.8.700.6 1.600 0 2.500L13.500 17l-3-2.500L22 1.500c.8-.900 1.700-1.100 2.500-.500z" fill="#fff" stroke="#666" stroke-width="1.100"/><path d="M10 14.500l3.500 3c-.5 3-4.500 5.500-10.500 4.500 2.500-1.500 2.500-5.500 7-7.500z" fill="#69afe5" stroke="#2b88d8" stroke-width="1"/></svg>
<div class="rc" style="left:1169.3px;top:138.7px">Cell</div>
<div class="rc" style="left:1164.5px;top:155.6px">Styles</div>
<svg class="ic" style="left:1183.0px;top:162.0px" width="8" height="5.5" viewBox="0 0 8 5.5" fill="none"><path d="M.8.9L4 4.2 7.200.9" stroke="#333" stroke-width="1.250"/></svg>
<div class="rl" style="left:1098px">Styles</div>
<div class="sep" style="left:1202px"></div>
<svg class="ic" style="left:1218.5px;top:104.0px" width="31" height="24.5" viewBox="0 0 31 24.5" fill="none"><rect x=".6" y=".6" width="29.800" height="23.300" fill="#fff" stroke="#767676" stroke-width="1.100"/><path d="M10.500 .6v23.300M20.500 .6v23.300M.6 8.300h29.800M.6 16.200h29.800" stroke="#767676" stroke-width="1"/><rect x="6" y="8.800" width="26" height="6.900" fill="#cfe6f8" stroke="#2b88d8" stroke-width="1"/><path d="M12 8.800v6.900M22 8.800v6.900" stroke="#2b88d8" stroke-width="1"/></svg>
<svg class="ic" style="left:1216px;top:108.5px" width="14" height="16" viewBox="0 0 14 16" fill="none"><path d="M13 8H1.500M8 1.500L1.500 8 8 14.500" stroke="#2b88d8" stroke-width="1.400" fill="none"/></svg>
<div class="rc" style="left:1234.2px;top:138.7px">Insert</div>
<svg class="ic" style="left:1230.7px;top:161.1px" width="8" height="5.5" viewBox="0 0 8 5.5" fill="none"><path d="M.8.9L4 4.2 7.200.9" stroke="#333" stroke-width="1.250"/></svg>
<svg class="ic" style="left:1263px;top:104.0px" width="31" height="24.5" viewBox="0 0 31 24.5" fill="none"><rect x=".6" y=".6" width="29.800" height="23.300" fill="#fff" stroke="#767676" stroke-width="1.100"/><path d="M10.500 .6v23.300M20.500 .6v23.300M.6 8.300h29.800M.6 16.200h29.800" stroke="#767676" stroke-width="1"/><rect x="5" y="8.800" width="16" height="6.900" fill="#cfe6f8" stroke="#2b88d8" stroke-width="1"/><path d="M12 8.800v6.900" stroke="#2b88d8" stroke-width="1"/><rect x="21.500" y="5" width="11" height="14" fill="#fff"/><path d="M22 6l10 12M32 6L22 18" stroke="#e03a48" stroke-width="1.300"/></svg>
<div class="rc" style="left:1278.2px;top:138.7px">Delete</div>
<svg class="ic" style="left:1274.8px;top:161.1px" width="8" height="5.5" viewBox="0 0 8 5.5" fill="none"><path d="M.8.9L4 4.2 7.200.9" stroke="#333" stroke-width="1.250"/></svg>
<svg class="ic" style="left:1307px;top:104.0px" width="31" height="24.5" viewBox="0 0 31 24.5" fill="none"><rect x=".6" y=".6" width="29.800" height="23.300" fill="#fff" stroke="#767676" stroke-width="1.100"/><path d="M8.500 .6v23.300M22.500 .6v23.300M.6 8.300h29.800M.6 16.200h29.800" stroke="#767676" stroke-width="1"/><rect x="8.500" y="8.300" width="14" height="7.900" fill="#cfe6f8" stroke="#2b88d8" stroke-width="1.100"/></svg>
<svg class="ic" style="left:1314px;top:99px" width="18" height="4" viewBox="0 0 18 4" fill="none"><path d="M.6 2h16.800M.6 0v4M17.400 0v4" stroke="#2b88d8" stroke-width="1.100"/></svg>
<div class="rc" style="left:1323px;top:138.7px">Format</div>
<svg class="ic" style="left:1319.8px;top:161.1px" width="8" height="5.5" viewBox="0 0 8 5.5" fill="none"><path d="M.8.9L4 4.2 7.200.9" stroke="#333" stroke-width="1.250"/></svg>
<div class="rl" style="left:1279px">Cells</div>
<div class="sep d" style="left:1354px"></div>
<svg class="ic" style="left:1373px;top:102.5px" width="14.5" height="16.5" viewBox="0 0 14.5 16.5" fill="none"><path d="M14 3.500V.700H.800L8 8.200.800 15.800H14V13" stroke="#444" stroke-width="1.200" stroke-linejoin="round"/></svg>
<div class="rt" style="left:1395.7px;top:103.7px">AutoSum</div>
<svg class="ic" style="left:1453.0px;top:109.2px" width="8" height="5.5" viewBox="0 0 8 5.5" fill="none"><path d="M.8.9L4 4.2 7.200.9" stroke="#333" stroke-width="1.250"/></svg>
<svg class="ic" style="left:1371.5px;top:131.5px" width="16.5" height="16" viewBox="0 0 16.5 16" fill="none"><path d="M9.500 1L15.500 6 8 15H4L1 12.200z" fill="#fff" stroke="#b146c2" stroke-width="1.200" stroke-linejoin="round"/><path d="M5.200 6.300l6 5L8 15H4L1 12.200z" fill="#d89be0" stroke="#b146c2" stroke-width="1"/></svg>
<div class="rt" style="left:1395.7px;top:131.8px">Clear</div>
<svg class="ic" style="left:1429.0px;top:138.0px" width="8" height="5.5" viewBox="0 0 8 5.5" fill="none"><path d="M.8.9L4 4.2 7.200.9" stroke="#333" stroke-width="1.250"/></svg>
<div class="rt" style="left:1474.5px;top:100px;font-size:17px;line-height:16px;top:101px;color:#2b88d8">A</div>
<div class="rt" style="left:1475px;top:114px;font-size:17px;line-height:16px;top:116.500px;color:#444">Z</div>
<svg class="ic" style="left:1488.5px;top:108.5px" width="18" height="18" viewBox="0 0 18 18" fill="none"><path d="M.8.800h16.400L10.800 9v8H7.200V9z" stroke="#444" stroke-width="1.150" stroke-linejoin="round" fill="#fff"/></svg>
<div class="rc" style="left:1490.6px;top:138.7px">Sort &amp;</div>
<div class="rc" style="left:1486px;top:155.6px">Filter</div>
<svg class="ic" style="left:1501.5px;top:162.0px" width="8" height="5.5" viewBox="0 0 8 5.5" fill="none"><path d="M.8.9L4 4.2 7.200.9" stroke="#333" stroke-width="1.250"/></svg>
<svg class="ic" style="left:1521px;top:101px" width="33" height="32" viewBox="0 0 33 32" fill="none"><circle cx="21" cy="11.500" r="10.800" stroke="#444" stroke-width="1.200" fill="#fff"/><path d="M13.200 19.500L.800 31.500" stroke="#444" stroke-width="1.300"/></svg>
<div class="rc" style="left:1537.5px;top:138.7px">Find &amp;</div>
<div class="rc" style="left:1533px;top:155.6px">Select</div>
<svg class="ic" style="left:1551.5px;top:162.0px" width="8" height="5.5" viewBox="0 0 8 5.5" fill="none"><path d="M.8.9L4 4.2 7.200.9" stroke="#333" stroke-width="1.250"/></svg>
<div class="rl" style="left:1463.3px">Editing</div>
<div class="sep" style="left:1571px"></div>
<svg class="ic" style="left:1591px;top:101px" width="30" height="30" viewBox="0 0 30 30" fill="none"><rect x=".8" y=".8" width="28.400" height="28.400" rx="4.500" stroke="#d83b01" stroke-width="1.400"/><rect x="6" y="6" width="7.300" height="7.300" rx="1" stroke="#d83b01" stroke-width="1.300"/><rect x="16.700" y="6" width="7.300" height="7.300" rx="1" stroke="#d83b01" stroke-width="1.300"/><rect x="6" y="16.700" width="7.300" height="7.300" rx="1" stroke="#d83b01" stroke-width="1.300"/><rect x="16.700" y="16.700" width="7.300" height="7.300" rx="1" stroke="#d83b01" stroke-width="1.300"/></svg>
<div class="rc" style="left:1606px;top:138.7px;font-size:13.200px">Add-ins</div>
<svg class="ic" style="left:1602.3px;top:161.1px" width="8" height="5.5" viewBox="0 0 8 5.5" fill="none"><path d="M.8.9L4 4.2 7.200.9" stroke="#333" stroke-width="1.250"/></svg>
<div class="rl" style="left:1606.4px">Add-ins</div>
<div class="sep" style="left:1640px"></div>
<svg class="ic" style="left:1654.8px;top:100.8px" width="35.2" height="31.2" viewBox="0 0 35.2 31.2" fill="none"><g stroke="#1e8a4c" stroke-width="1.150" stroke-linejoin="round"><path d="M20 .6H23.200C25.200 .6 26.300 1.600 27 3.800 27.700 6 28.300 7.600 29.400 8.600H17.700z" fill="#8cc9a8"/><path d="M4.500 22.300H17.400L15.200 30.500H12C10 30.500 8.900 29.500 8.200 27.300 7.500 25.100 6.900 23.500 5.800 22.500z" fill="#8cc9a8"/><path d="M8.900 .6H20L13.600 22.300H4.500C1.500 22.300 0 20.500 .8 17.800L4.600 4.200C5.300 1.800 6.600 .6 8.900 .6z" fill="#fff"/><path d="M21.500 8.600H31C34 8.600 35.200 10.500 34.400 13.200L30.600 26.800C29.900 29.200 28.600 30.500 26.300 30.500H15.200z" fill="#fff"/></g></svg>
<div class="rc" style="left:1672.7px;top:138.7px;font-size:13.200px">Copilot</div>
<div class="sep" style="left:1705px"></div>
<div class="abs" style="left:1740px;top:98.500px;width:36px;height:36px;border-radius:50%;background:#2ca01c"></div>
<svg class="ic" style="left:1746px;top:107px" width="24" height="19" viewBox="0 0 24 19" fill="none"><path d="M9.500 3.500H7a5.500 5.500 0 0 0 0 11h1.200" stroke="#fff" stroke-width="2.300"/><path d="M9.300 3.200v15.500" stroke="#fff" stroke-width="2.300"/><path d="M14.500 15.500H17a5.500 5.500 0 0 0 0-11h-1.200" stroke="#fff" stroke-width="2.300"/><path d="M14.700 .300v15.500" stroke="#fff" stroke-width="2.300"/></svg>
<div class="rc" style="left:1757.3px;top:138.7px;font-size:12.600px">Spreadsheet</div>
<div class="rc" style="left:1757.5px;top:155.6px">Sync</div>
<div class="rl" style="left:1757.600px;font-size:10.400px">Spreadsheet Sync</div>
<div class="sep" style="left:1809px"></div>
<svg class="ic" style="left:2526px;top:182.5px" width="12" height="7" viewBox="0 0 12 7" fill="none"><path d="M.8.800l5.200 5.200L11.200.800" stroke="#333" stroke-width="1.300"/></svg>
<!-- formula bar -->
<div class="abs" style="left:1px;top:206px;width:137px;height:26px;background:#fff;border:1px solid #e4e4e4;border-radius:2px"></div>
<div class="abs" style="left:7px;top:211px;font-size:13.4px;line-height:18px;color:#333">G1</div>
<svg class="abs" style="left:124.500px;top:218px" width="8" height="5.500" viewBox="0 0 9 6" fill="none"><path d="M1 1l3.500 3.500L8 1" stroke="#333" stroke-width="1.300"/></svg>
<div class="abs" style="left:145px;top:206px;width:98px;height:26px;background:#fff;border:1px solid #e8e8e8;border-radius:2px"></div>
<svg class="abs" style="left:156px;top:212px" width="13" height="13" viewBox="0 0 13 13" fill="none"><path d="M.8.800l11.400 11.400M12.200.800L.800 12.200" stroke="#bdbdbd" stroke-width="1.100"/></svg>
<svg class="abs" style="left:186px;top:212px" width="18" height="13" viewBox="0 0 18 13" fill="none"><path d="M.8 7.500l5 4.700L17.200.800" stroke="#bdbdbd" stroke-width="1.100"/></svg>
<div class="abs" style="left:220px;top:209px;font-family:'Liberation Serif',serif;font-style:italic;font-size:16px;line-height:20px;color:#333">f<span style="font-size:12.500px">x</span></div>
<div class="abs" style="left:246px;top:206px;width:2307px;height:26px;background:#fff;border:1px solid #e4e4e4;border-radius:2px"></div>
<div class="abs" style="left:250px;top:208px;font-size:14.4px;line-height:18px;color:#242424">Commissions</div>
<svg class="abs" style="left:2538px;top:215px" width="12" height="7" viewBox="0 0 12 7" fill="none"><path d="M1 1l5 5 5-5" stroke="#242424" stroke-width="1.400"/></svg>
<div id="grid"><div class="colhdr"><div class="corner"></div>
<div class="ch" style="left:58px;width:254px">A</div>
<div class="ch" style="left:312px;width:271px">B</div>
<div class="ch" style="left:583px;width:148px">C</div>
<div class="ch" style="left:731px;width:284px">D</div>
<div class="ch" style="left:1015px;width:155px">E</div>
<div class="ch" style="left:1170px;width:243px">F</div>
<div class="ch sel" style="left:1413px;width:175px">G</div>
<div class="ch" style="left:1588px;width:105px">H</div>
<div class="ch" style="left:1693px;width:106px">I</div>
<div class="ch" style="left:1799px;width:105px">J</div>
<div class="ch" style="left:1904px;width:106px">K</div>
<div class="ch" style="left:2010px;width:106px">L</div>
</div>
<div class="rowhdr">
<div class="rh" style="top:0px">1</div>
<div class="rh" style="top:33px">2</div>
<div class="rh" style="top:66px">3</div>
<div class="rh" style="top:99px">4</div>
<div class="rh" style="top:132px">5</div>
<div class="rh" style="top:165px">6</div>
<div class="rh" style="top:198px">7</div>
<div class="rh" style="top:231px">8</div>
<div class="rh" style="top:264px">9</div>
<div class="rh" style="top:297px">10</div>
<div class="rh" style="top:330px">11</div>
<div class="rh" style="top:363px">12</div>
<div class="rh" style="top:396px">13</div>
<div class="rh" style="top:429px">14</div>
<div class="rh" style="top:462px">15</div>
<div class="rh" style="top:495px">16</div>
<div class="rh" style="top:528px">17</div>
<div class="rh" style="top:561px">18</div>
<div class="rh" style="top:594px">19</div>
<div class="rh" style="top:627px">20</div>
<div class="rh" style="top:660px">21</div>
<div class="rh" style="top:693px">22</div>
<div class="rh" style="top:726px">23</div>
<div class="rh" style="top:759px">24</div>
<div class="rh" style="top:792px">25</div>
<div class="rh" style="top:825px">26</div>
<div class="rh" style="top:858px">27</div>
<div class="rh" style="top:891px">28</div>
</div>
<div class="sheet">
<div class="hl" style="top:32px"></div>
<div class="hl" style="top:65px"></div>
<div class="hl" style="top:98px"></div>
<div class="hl" style="top:131px"></div>
<div class="hl" style="top:164px"></div>
<div class="hl" style="top:197px"></div>
<div class="hl" style="top:230px"></div>
<div class="hl" style="top:263px"></div>
<div class="hl" style="top:296px"></div>
<div class="hl" style="top:329px"></div>
<div class="hl" style="top:362px"></div>
<div class="hl" style="top:395px"></div>
<div class="hl" style="top:428px"></div>
<div class="hl" style="top:461px"></div>
<div class="hl" style="top:494px"></div>
<div class="hl" style="top:527px"></div>
<div class="hl" style="top:560px"></div>
<div class="hl" style="top:593px"></div>
<div class="hl" style="top:626px"></div>
<div class="hl" style="top:659px"></div>
<div class="hl" style="top:692px"></div>
<div class="hl" style="top:725px"></div>
<div class="hl" style="top:758px"></div>
<div class="hl" style="top:791px"></div>
<div class="hl" style="top:824px"></div>
<div class="hl" style="top:857px"></div>
<div class="hl" style="top:890px"></div>
<div class="hl" style="top:923px"></div>
<div class="vl" style="left:1529px"></div>
<div class="vl" style="left:1634px"></div>
<div class="vl" style="left:1740px"></div>
<div class="vl" style="left:1845px"></div>
<div class="vl" style="left:1951px"></div>
<div class="vl" style="left:2057px"></div>
<div class="th" style="left:0px;width:254px"><span style="transform:scaleX(0.831)">Sales Person</span><i class="fb"></i></div>
<div class="th" style="left:254px;width:271px"><span style="transform:scaleX(0.843)">Services Sold</span><i class="fb"></i></div>
<div class="th" style="left:525px;width:148px"><span style="transform:scaleX(0.863)">Sales Date</span><i class="fb"></i></div>
<div class="th" style="left:673px;width:284px"><span style="transform:scaleX(0.849)">Campaign Type</span><i class="fb"></i></div>
<div class="th" style="left:957px;width:155px"><span style="transform:scaleX(0.843)">Total Sale</span><i class="fb"></i></div>
<div class="th" style="left:1112px;width:243px"><span style="transform:scaleX(0.878)">Client name</span><i class="fb"></i></div>
<div class="th" style="left:1355px;width:175px"><span style="transform:scaleX(0.857)">Commissions</span><i class="fb"></i></div>
<div class="tr b" style="top:33px">
<div class="td" style="left:0px;width:254px">Ham, Derik</div>
<div class="td" style="left:254px;width:271px">Late Jan Email</div>
<div class="td r" style="left:525px;width:148px">1/27/2023</div>
<div class="td" style="left:673px;width:284px">Digital marketing</div>
<div class="td cur" style="left:957px;width:155px"><em>$</em><span>500</span></div>
<div class="td" style="left:1112px;width:243px">Rocko Inc</div>
<div class="td cur g" style="left:1355px;width:175px"><em>$</em><span>100</span></div>
</div>
<div class="tr w" style="top:66px">
<div class="td" style="left:0px;width:254px">Kovaleva, Anna</div>
<div class="td" style="left:254px;width:271px">Billboards small</div>
<div class="td r" style="left:525px;width:148px">1/29/2023</div>
<div class="td" style="left:673px;width:284px">Brand marketing</div>
<div class="td cur" style="left:957px;width:155px"><em>$</em><span>250</span></div>
<div class="td" style="left:1112px;width:243px">TomTops</div>
<div class="td cur g" style="left:1355px;width:175px"><em>$</em><span>50</span></div>
</div>
<div class="tr b" style="top:99px">
<div class="td" style="left:0px;width:254px">Smith, Avery</div>
<div class="td" style="left:254px;width:271px">Billboards large</div>
<div class="td r" style="left:525px;width:148px">2/3/2023</div>
<div class="td" style="left:673px;width:284px">Brand marketing</div>
<div class="td cur" style="left:957px;width:155px"><em>$</em><span>4,500</span></div>
<div class="td" style="left:1112px;width:243px">John &amp; Jane</div>
<div class="td cur g" style="left:1355px;width:175px"><em>$</em><span>900</span></div>
</div>
<div class="tr w" style="top:132px">
<div class="td" style="left:0px;width:254px">Glam, Ilya</div>
<div class="td" style="left:254px;width:271px">Product review 3x</div>
<div class="td r" style="left:525px;width:148px">1/16/2023</div>
<div class="td" style="left:673px;width:284px">Customer Experience</div>
<div class="td cur" style="left:957px;width:155px"><em>$</em><span>2,750</span></div>
<div class="td" style="left:1112px;width:243px">Tim Nertons</div>
<div class="td cur g" style="left:1355px;width:175px"><em>$</em><span>550</span></div>
</div>
<div class="tr b" style="top:165px">
<div class="td" style="left:0px;width:254px">Lawson, Andre</div>
<div class="td" style="left:254px;width:271px">Targeted - Group 1</div>
<div class="td r" style="left:525px;width:148px">1/26/2023</div>
<div class="td" style="left:673px;width:284px">Digital marketing</div>
<div class="td cur" style="left:957px;width:155px"><em>$</em><span>5,800</span></div>
<div class="td" style="left:1112px;width:243px">Billo Co</div>
<div class="td cur g" style="left:1355px;width:175px"><em>$</em><span>1,160</span></div>
</div>
<div class="tr w" style="top:198px">
<div class="td" style="left:0px;width:254px">Cartier, Christian</div>
<div class="td" style="left:254px;width:271px">Billboards small</div>
<div class="td r" style="left:525px;width:148px">1/3/2023</div>
<div class="td" style="left:673px;width:284px">Brand marketing</div>
<div class="td cur" style="left:957px;width:155px"><em>$</em><span>800</span></div>
<div class="td" style="left:1112px;width:243px">KonKom</div>
<div class="td cur g" style="left:1355px;width:175px"><em>$</em><span>160</span></div>
</div>
<div class="tr b" style="top:231px">
<div class="td" style="left:0px;width:254px">Barden, Malik</div>
<div class="td" style="left:254px;width:271px">Industry Conference</div>
<div class="td r" style="left:525px;width:148px">2/23/2023</div>
<div class="td" style="left:673px;width:284px">Customer Experience</div>
<div class="td cur" style="left:957px;width:155px"><em>$</em><span>600</span></div>
<div class="td" style="left:1112px;width:243px">Fran Dran</div>
<div class="td cur g" style="left:1355px;width:175px"><em>$</em><span>120</span></div>
</div>
<div class="tr w" style="top:264px">
<div class="td" style="left:0px;width:254px">Connors, Morgan</div>
<div class="td" style="left:254px;width:271px">Targeted - Group 2</div>
<div class="td r" style="left:525px;width:148px">2/25/2023</div>
<div class="td" style="left:673px;width:284px">Digital marketing</div>
<div class="td cur" style="left:957px;width:155px"><em>$</em><span>800</span></div>
<div class="td" style="left:1112px;width:243px">Jim Snort</div>
<div class="td cur g" style="left:1355px;width:175px"><em>$</em><span>160</span></div>
</div>
<div class="tr b" style="top:297px">
<div class="td" style="left:0px;width:254px">Ham, Derik</div>
<div class="td" style="left:254px;width:271px">Feb email - North</div>
<div class="td r" style="left:525px;width:148px">2/11/2023</div>
<div class="td" style="left:673px;width:284px">Digital marketing</div>
<div class="td cur" style="left:957px;width:155px"><em>$</em><span>500</span></div>
<div class="td" style="left:1112px;width:243px">Bid Deal</div>
<div class="td cur g" style="left:1355px;width:175px"><em>$</em><span>100</span></div>
</div>
<div class="tr w" style="top:330px">
<div class="td" style="left:0px;width:254px">Ham, Derik</div>
<div class="td" style="left:254px;width:271px">Feb email - South</div>
<div class="td r" style="left:525px;width:148px">2/12/2023</div>
<div class="td" style="left:673px;width:284px">Digital marketing</div>
<div class="td cur" style="left:957px;width:155px"><em>$</em><span>500</span></div>
<div class="td" style="left:1112px;width:243px">Sam Tree</div>
<div class="td cur g" style="left:1355px;width:175px"><em>$</em><span>100</span></div>
</div>
<div class="tr b" style="top:363px">
<div class="td" style="left:0px;width:254px">Ham, Derik</div>
<div class="td" style="left:254px;width:271px">Feb email - West</div>
<div class="td r" style="left:525px;width:148px">2/13/2023</div>
<div class="td" style="left:673px;width:284px">Digital marketing</div>
<div class="td cur" style="left:957px;width:155px"><em>$</em><span>500</span></div>
<div class="td" style="left:1112px;width:243px">Krill Trill</div>
<div class="td cur g" style="left:1355px;width:175px"><em>$</em><span>100</span></div>
</div>
<div class="tr w" style="top:396px">
<div class="td" style="left:0px;width:254px">Connors, Morgan</div>
<div class="td" style="left:254px;width:271px">Product mention 5x</div>
<div class="td r" style="left:525px;width:148px">2/17/2023</div>
<div class="td" style="left:673px;width:284px">Customer Experience</div>
<div class="td cur" style="left:957px;width:155px"><em>$</em><span>635</span></div>
<div class="td" style="left:1112px;width:243px">Swell Stell</div>
<div class="td cur g" style="left:1355px;width:175px"><em>$</em><span>127</span></div>
</div>
<div class="tr b" style="top:429px">
<div class="td" style="left:0px;width:254px">Ham, Derik</div>
<div class="td" style="left:254px;width:271px">Late Jan Email</div>
<div class="td r" style="left:525px;width:148px">1/27/2023</div>
<div class="td" style="left:673px;width:284px">Digital marketing</div>
<div class="td cur" style="left:957px;width:155px"><em>$</em><span>500</span></div>
<div class="td" style="left:1112px;width:243px">Rocko Inc</div>
<div class="td cur g" style="left:1355px;width:175px"><em>$</em><span>100</span></div>
</div>
<div class="tr w" style="top:462px">
<div class="td" style="left:0px;width:254px">Kovaleva, Anna</div>
<div class="td" style="left:254px;width:271px">Billboards small</div>
<div class="td r" style="left:525px;width:148px">1/29/2023</div>
<div class="td" style="left:673px;width:284px">Brand marketing</div>
<div class="td cur" style="left:957px;width:155px"><em>$</em><span>250</span></div>
<div class="td" style="left:1112px;width:243px">TomTops</div>
<div class="td cur g" style="left:1355px;width:175px"><em>$</em><span>50</span></div>
</div>
<div class="tr b" style="top:495px">
<div class="td" style="left:0px;width:254px">Smith, Avery</div>
<div class="td" style="left:254px;width:271px">Billboards large</div>
<div class="td r" style="left:525px;width:148px">2/3/2023</div>
<div class="td" style="left:673px;width:284px">Brand marketing</div>
<div class="td cur" style="left:957px;width:155px"><em>$</em><span>4,500</span></div>
<div class="td" style="left:1112px;width:243px">John &amp; Jane</div>
<div class="td cur g" style="left:1355px;width:175px"><em>$</em><span>900</span></div>
</div>
<div class="tr w" style="top:528px">
<div class="td" style="left:0px;width:254px">Glam, Ilya</div>
<div class="td" style="left:254px;width:271px">Product review 3x</div>
<div class="td r" style="left:525px;width:148px">1/16/2023</div>
<div class="td" style="left:673px;width:284px">Customer Experience</div>
<div class="td cur" style="left:957px;width:155px"><em>$</em><span>2,750</span></div>
<div class="td" style="left:1112px;width:243px">Tim Nertons</div>
<div class="td cur g" style="left:1355px;width:175px"><em>$</em><span>550</span></div>
</div>
<div class="tr b" style="top:561px">
<div class="td" style="left:0px;width:254px">Lawson, Andre</div>
<div class="td" style="left:254px;width:271px">Targeted - Group 1</div>
<div class="td r" style="left:525px;width:148px">1/26/2023</div>
<div class="td" style="left:673px;width:284px">Digital marketing</div>
<div class="td cur" style="left:957px;width:155px"><em>$</em><span>5,800</span></div>
<div class="td" style="left:1112px;width:243px">Billo Co</div>
<div class="td cur g" style="left:1355px;width:175px"><em>$</em><span>1,160</span></div>
</div>
<div class="tr w" style="top:594px">
<div class="td" style="left:0px;width:254px">Cartier, Christian</div>
<div class="td" style="left:254px;width:271px">Billboards small</div>
<div class="td r" style="left:525px;width:148px">1/3/2023</div>
<div class="td" style="left:673px;width:284px">Brand marketing</div>
<div class="td cur" style="left:957px;width:155px"><em>$</em><span>800</span></div>
<div class="td" style="left:1112px;width:243px">KonKom</div>
<div class="td cur g" style="left:1355px;width:175px"><em>$</em><span>160</span></div>
</div>
<div class="tr b" style="top:627px">
<div class="td" style="left:0px;width:254px">Barden, Malik</div>
<div class="td" style="left:254px;width:271px">Industry Conference</div>
<div class="td r" style="left:525px;width:148px">2/23/2023</div>
<div class="td" style="left:673px;width:284px">Customer Experience</div>
<div class="td cur" style="left:957px;width:155px"><em>$</em><span>600</span></div>
<div class="td" style="left:1112px;width:243px">Fran Dran</div>
<div class="td cur g" style="left:1355px;width:175px"><em>$</em><span>120</span></div>
</div>
<div class="tr w" style="top:660px">
<div class="td" style="left:0px;width:254px">Connors, Morgan</div>
<div class="td" style="left:254px;width:271px">Targeted - Group 2</div>
<div class="td r" style="left:525px;width:148px">2/25/2023</div>
<div class="td" style="left:673px;width:284px">Digital marketing</div>
<div class="td cur" style="left:957px;width:155px"><em>$</em><span>800</span></div>
<div class="td" style="left:1112px;width:243px">Jim Snort</div>
<div class="td cur g" style="left:1355px;width:175px"><em>$</em><span>160</span></div>
</div>
<div class="tr b" style="top:693px">
<div class="td" style="left:0px;width:254px">Ham, Derik</div>
<div class="td" style="left:254px;width:271px">Feb email - North</div>
<div class="td r" style="left:525px;width:148px">2/11/2023</div>
<div class="td" style="left:673px;width:284px">Digital marketing</div>
<div class="td cur" style="left:957px;width:155px"><em>$</em><span>500</span></div>
<div class="td" style="left:1112px;width:243px">Bid Deal</div>
<div class="td cur g" style="left:1355px;width:175px"><em>$</em><span>100</span></div>
</div>
<div class="tr w" style="top:726px">
<div class="td" style="left:0px;width:254px">Ham, Derik</div>
<div class="td" style="left:254px;width:271px">Feb email - South</div>
<div class="td r" style="left:525px;width:148px">2/12/2023</div>
<div class="td" style="left:673px;width:284px">Digital marketing</div>
<div class="td cur" style="left:957px;width:155px"><em>$</em><span>500</span></div>
<div class="td" style="left:1112px;width:243px">Sam Tree</div>
<div class="td cur g" style="left:1355px;width:175px"><em>$</em><span>100</span></div>
</div>
<div class="tr b" style="top:759px">
<div class="td" style="left:0px;width:254px">Ham, Derik</div>
<div class="td" style="left:254px;width:271px">Feb email - West</div>
<div class="td r" style="left:525px;width:148px">2/13/2023</div>
<div class="td" style="left:673px;width:284px">Digital marketing</div>
<div class="td cur" style="left:957px;width:155px"><em>$</em><span>500</span></div>
<div class="td" style="left:1112px;width:243px">Krill Trill</div>
<div class="td cur g" style="left:1355px;width:175px"><em>$</em><span>100</span></div>
</div>
<div class="tr w" style="top:792px">
<div class="td" style="left:0px;width:254px">Connors, Morgan</div>
<div class="td" style="left:254px;width:271px">Product mention 5x</div>
<div class="td r" style="left:525px;width:148px">2/17/2023</div>
<div class="td" style="left:673px;width:284px">Customer Experience</div>
<div class="td cur" style="left:957px;width:155px"><em>$</em><span>635</span></div>
<div class="td" style="left:1112px;width:243px">Swell Stell</div>
<div class="td cur g" style="left:1355px;width:175px"><em>$</em><span>127</span></div>
</div>
<div class="tr b" style="top:825px">
<div class="td" style="left:0px;width:254px">Ham, Derik</div>
<div class="td" style="left:254px;width:271px">Late Jan Email</div>
<div class="td r" style="left:525px;width:148px">1/27/2023</div>
<div class="td" style="left:673px;width:284px">Digital marketing</div>
<div class="td cur" style="left:957px;width:155px"><em>$</em><span>500</span></div>
<div class="td" style="left:1112px;width:243px">Rocko Inc</div>
<div class="td cur g" style="left:1355px;width:175px"><em>$</em><span>100</span></div>
</div>
<div class="tr w" style="top:858px">
<div class="td" style="left:0px;width:254px">Kovaleva, Anna</div>
<div class="td" style="left:254px;width:271px">Billboards small</div>
<div class="td r" style="left:525px;width:148px">1/29/2023</div>
<div class="td" style="left:673px;width:284px">Brand marketing</div>
<div class="td cur" style="left:957px;width:155px"><em>$</em><span>250</span></div>
<div class="td" style="left:1112px;width:243px">TomTops</div>
<div class="td cur g" style="left:1355px;width:175px"><em>$</em><span>50</span></div>
</div>
<div class="tr b" style="top:891px">
<div class="td" style="left:0px;width:254px">Smith, Avery</div>
<div class="td" style="left:254px;width:271px">Billboards large</div>
<div class="td r" style="left:525px;width:148px">2/3/2023</div>
<div class="td" style="left:673px;width:284px">Brand marketing</div>
<div class="td cur" style="left:957px;width:155px"><em>$</em><span>4,500</span></div>
<div class="td" style="left:1112px;width:243px">John &amp; Jane</div>
<div class="td cur g" style="left:1355px;width:175px"><em>$</em><span>900</span></div>
</div>
<div class="gsel"></div>
</div></div><!-- bottom -->
<div class="abs" style="left:58px;top:1195px;width:2100px;height:14px;background:#e7e7e7"></div>
<div class="abs" style="left:74px;top:1198px;width:1094px;height:8px;border-radius:4px;background:#8c8c8c"></div>
<div class="abs" style="left:61px;top:1198px;width:0;height:0;border-top:4px solid transparent;border-bottom:4px solid transparent;border-right:7px solid #8a8a8a"></div>
<div class="abs" style="left:2147px;top:1198px;width:0;height:0;border-top:4px solid transparent;border-bottom:4px solid transparent;border-left:7px solid #8a8a8a"></div>
<!-- vscroll -->
<div class="abs" style="left:2158px;top:274px;width:13px;height:935px;background:#e8e8e8"></div>
<div class="abs" style="left:2161px;top:291px;width:7px;height:437px;border-radius:3.500px;background:#8a8a8a"></div>
<div class="abs" style="left:2160px;top:277.500px;width:0;height:0;border-left:4.500px solid transparent;border-right:4.500px solid transparent;border-bottom:7px solid #8a8a8a"></div>
<div class="abs" style="left:2160px;top:1186px;width:0;height:0;border-left:4.500px solid transparent;border-right:4.500px solid transparent;border-top:7px solid #8a8a8a"></div>
<!-- sheet tabs -->
<svg class="abs" style="left:10px;top:1219px" width="8" height="14" viewBox="0 0 8 14" fill="none"><path d="M7 1L1.500 7 7 13" stroke="#c4c4c4" stroke-width="1.300"/></svg>
<svg class="abs" style="left:45px;top:1219px" width="8" height="14" viewBox="0 0 8 14" fill="none"><path d="M1 1l5.500 6L1 13" stroke="#c4c4c4" stroke-width="1.300"/></svg>
<svg class="abs" style="left:78px;top:1221px" width="14" height="11" viewBox="0 0 14 11" fill="none"><path d="M0 .700h14M0 5.500h14M0 10.300h14" stroke="#333" stroke-width="1.300"/></svg>
<div class="abs" style="left:114px;top:1216px;font-size:14.800px;line-height:20px;color:#333;font-weight:bold;transform:scaleX(.94);transform-origin:0 50%">Sheet1</div>
<svg class="abs" style="left:183px;top:1220px" width="13" height="13" viewBox="0 0 13 13" fill="none"><path d="M6.500 0v13M0 6.500h13" stroke="#333" stroke-width="1.300"/></svg>
<div class="pinkcol"></div><!-- copilot -->
<style>
#cp{position:absolute;left:2171px;top:232px;width:385px;height:1010px;background:#f5f5f5;border-left:1px solid #e0e0e0}
#cp .t{position:absolute;white-space:nowrap;font-size:15.3px;line-height:22px;color:#303030}
#cp .card{position:absolute;background:#fff;border-radius:8px;box-shadow:0 1px 3px rgba(0,0,0,.22),0 0 1px rgba(0,0,0,.2)}
#cp .bub{position:absolute;background:#c6e9d3;border-radius:8px}
#cp .sm{position:absolute;white-space:nowrap;font-size:11.1px;line-height:14px;color:#616161}
</style>
<div id="cp">
 <!-- header -->
 <svg class="abs" style="left:19px;top:24px" width="24.500" height="22.500" viewBox="0 0 24.500 22.500">
  <defs>
   <linearGradient id="cg2" x1="0.300" y1="0" x2="0.200" y2="1"><stop offset="0" stop-color="#1a9bf0"/><stop offset=".35" stop-color="#22b3c8"/><stop offset=".62" stop-color="#63c96a"/><stop offset=".85" stop-color="#d9d61e"/><stop offset="1" stop-color="#f5c80f"/></linearGradient>
   <linearGradient id="cg3" x1="0.600" y1="0" x2="0.400" y2="1"><stop offset="0" stop-color="#b05af5"/><stop offset=".4" stop-color="#e255b2"/><stop offset=".7" stop-color="#f4637e"/><stop offset="1" stop-color="#f9973f"/></linearGradient>
   <linearGradient id="cg4" x1="0" y1="0" x2="1" y2="1"><stop offset="0" stop-color="#f98b2e"/><stop offset="1" stop-color="#ee4a3a"/></linearGradient>
  </defs>
  <path d="M12.500 0h2.600c1.500 0 2.300.7 2.800 2.200l1.500 4.500h-4.600z" fill="#1460d6"/>
  <path d="M6.800 0h6.600c1 0 1.400.5 1.100 1.500L9.900 15.200c-.3.800-.9 1.200-1.800 1.200H3.200c-2.400 0-3.600-1.700-2.900-4L3.100 2.700C3.600.9 4.800 0 6.800 0z" fill="url(#cg2)"/>
  <path d="M11.800 22.500H9.200c-1.500 0-2.300-.7-2.800-2.200l-1.300-3.900h4.800z" fill="url(#cg4)"/>
  <path d="M17.700 22.500h-6.600c-1 0-1.400-.5-1.100-1.500L14.600 7.900c.3-.8.900-1.200 1.800-1.200h4.900c2.400 0 3.600 1.700 2.900 4l-2.800 9.100c-.5 1.800-1.700 2.700-3.700 2.700z" fill="url(#cg3)"/>
 </svg>
 <div class="t" style="left:53.500px;top:21.500px;font-size:18.400px;line-height:26px">Copilot</div>
 <div class="abs" style="left:116px;top:28px;width:57px;height:16.500px;border-radius:6px;background:#ebebeb"></div>
 <div class="sm" style="left:122.500px;top:30px;font-size:10.600px;color:#424242;transform:scaleX(.9);transform-origin:0 50%">PREVIEW</div>
 <svg class="abs" style="left:349px;top:28px" width="12" height="12" viewBox="0 0 12 12" fill="none"><path d="M.7.700l10.600 10.600M11.300.700L.700 11.300" stroke="#242424" stroke-width="1.300"/></svg>

 <!-- scroll -->
 <div class="abs" style="left:372px;top:74px;width:13px;height:936px;background:#f9f9f9"></div>
 <div class="abs" style="left:375px;top:331px;width:8.500px;height:402px;border-radius:4px;background:#616161"></div>

 <!-- user bubble 1 -->
 <div class="bub" style="left:85px;top:79px;width:270px;height:71px"></div>
 <div class="t" style="left:99px;top:93px">Add a Commissions column using</div>
 <div class="t" style="left:99px;top:115px">the total sales *.20</div>

 <!-- AI card 1 -->
 <div class="card" style="left:18px;top:160px;width:337px;height:319px"></div>
 <div class="t" style="left:31px;top:175px">Here's 1 formula column to review and insert:</div>
 <div class="t" style="left:31px;top:222.500px">Calculates the commission earned by each</div>
 <div class="t" style="left:31px;top:244.500px">salesperson by multiplying their total sale by</div>
 <div class="t" style="left:31px;top:267px">0.2 (20% commission rate).</div>
 <div class="abs" style="left:30px;top:300px;width:313px;height:81px;border:1px solid #d6d6d6;border-radius:4px;background:#fafafa;overflow:hidden">
  <div class="abs" style="left:0;top:0;width:311px;height:34px;background:#f0f0f0;border-bottom:1px solid #d6d6d6"></div>
 </div>
 <div class="t" style="left:44px;top:308.500px;font-weight:bold;font-size:14px;color:#3a3a3a">Commissions</div>
 <svg class="abs" style="left:313px;top:309.500px" width="15" height="18" viewBox="0 0 15 18" fill="none" stroke="#333" stroke-width="1.200"><rect x="3.600" y=".600" width="10.800" height="14" rx="2"/><path d="M3.500 3.200H2.800A2.200 2.200 0 0 0 .600 5.400v9.800a2.200 2.200 0 0 0 2.200 2.200h6.400a2.200 2.200 0 0 0 2.200-2.200"/></svg>
 <div class="t" style="left:44px;top:351px;font-family:'Liberation Mono',monospace;font-size:14.100px">=[@[Total Sale]] * 0.2</div>
 <div class="t" style="left:32px;top:390.500px;font-size:13px">Explain formula</div>
 <svg class="abs" style="left:132px;top:398px" width="12" height="7" viewBox="0 0 12 7" fill="none"><path d="M.8.800l5.200 5.200L11.200.800" stroke="#333" stroke-width="1.200"/></svg>
 <div class="sm" style="left:31px;top:442px">AI-generated content may be incorrect</div>
 <svg class="abs" style="left:293px;top:439.500px" width="16" height="17" viewBox="0 0 16 17" fill="none" stroke="#333" stroke-width="1.150" stroke-linejoin="round"><path d="M5.200 7.500C7 6 8 3.500 8 1.500c0-.7 2.400-.600 2.400 1.700 0 1.300-.5 2.500-.8 3.300h3.200c1.200 0 1.800 1 1.500 2l-1.300 5c-.4 1.500-1.500 2.300-3 2.100l-5-.7c-1.200-.2-2.200-1-2.600-2.200l-.8-2.500c-.3-1 .3-2 1.400-2.300z"/></svg>
 <svg class="abs" style="left:321px;top:440.500px" width="16" height="17" viewBox="0 0 16 17" fill="none" stroke="#333" stroke-width="1.150" stroke-linejoin="round"><g transform="rotate(180 8 8.500)"><path d="M5.200 7.500C7 6 8 3.500 8 1.500c0-.7 2.400-.600 2.400 1.700 0 1.300-.5 2.500-.8 3.300h3.200c1.200 0 1.800 1 1.500 2l-1.300 5c-.4 1.500-1.500 2.300-3 2.100l-5-.7c-1.200-.2-2.200-1-2.600-2.200l-.8-2.500c-.3-1 .3-2 1.400-2.300z"/></g></svg>

 <!-- pink highlight -->
 <div class="abs" style="left:9px;top:82px;width:356px;height:405px;border:3px solid #de2a96;box-shadow:0 3px 6px rgba(0,0,0,.38),inset 0 5px 5px -2px rgba(0,0,0,.36),inset 2px 0 3px -1px rgba(0,0,0,.15)"></div>

 <!-- user bubble 2 -->
 <div class="bub" style="left:237px;top:490px;width:119px;height:48px"></div>
 <div class="t" style="left:250px;top:503.500px">Insert column</div>

 <!-- AI card 2 -->
 <div class="card" style="left:18px;top:549px;width:337px;height:123px"></div>
 <div class="t" style="left:31px;top:563px">Done! I inserted 'Commissions' to column G.</div>
 <div class="abs" style="left:32px;top:598px;width:76px;height:26px;border:1px solid #d1d1d1;border-radius:4px;background:#fff"></div>
 <svg class="abs" style="left:44px;top:604px" width="14" height="14" viewBox="0 0 14 14" fill="none" stroke="#333" stroke-width="1.200"><path d="M1.200 1v5h5"/><path d="M1.500 5.800C3 3.200 5.500 1.800 8 2.200c2.600.4 4.600 2.500 4.600 5 0 1.800-1 3.300-2.800 4.600L6.500 13.500"/></svg>
 <div class="t" style="left:65.500px;top:600px;font-size:13.100px">Undo</div>
 <div class="sm" style="left:31px;top:635px">AI-generated content may be incorrect</div>
 <svg class="abs" style="left:293px;top:633px" width="16" height="17" viewBox="0 0 16 17" fill="none" stroke="#333" stroke-width="1.150" stroke-linejoin="round"><path d="M5.200 7.500C7 6 8 3.500 8 1.500c0-.7 2.400-.600 2.400 1.700 0 1.300-.5 2.500-.8 3.300h3.200c1.200 0 1.800 1 1.500 2l-1.300 5c-.4 1.500-1.500 2.300-3 2.100l-5-.7c-1.200-.2-2.200-1-2.600-2.200l-.8-2.500c-.3-1 .3-2 1.400-2.300z"/></svg>
 <svg class="abs" style="left:321px;top:634px" width="16" height="17" viewBox="0 0 16 17" fill="none" stroke="#333" stroke-width="1.150" stroke-linejoin="round"><g transform="rotate(180 8 8.500)"><path d="M5.200 7.500C7 6 8 3.500 8 1.500c0-.7 2.400-.600 2.400 1.700 0 1.300-.5 2.500-.8 3.300h3.200c1.200 0 1.800 1 1.500 2l-1.300 5c-.4 1.500-1.500 2.300-3 2.100l-5-.7c-1.200-.2-2.200-1-2.600-2.200l-.8-2.500c-.3-1 .3-2 1.400-2.300z"/></g></svg>

 <!-- change topic -->
 <svg class="abs" style="left:141px;top:693px" width="19" height="19" viewBox="0 0 19 19" fill="none" stroke="#333" stroke-width="1.200"><path d="M9.800 1.200a8.200 8.200 0 1 1-4 15.400L1.200 17.800l1.300-4.300A8.200 8.200 0 0 1 9.800 1.200z" stroke-linejoin="round"/><path d="M9.800 5.800v7M6.300 9.300h7"/></svg>
 <div class="t" style="left:166px;top:691px;font-size:13.100px">Change topic</div>

 <!-- input -->
 <div class="abs" style="left:18px;top:866px;width:349px;height:124px;border:1px solid #e3e3e3;border-radius:8px;background:#fff"></div>
 <div class="t" style="left:37px;top:883.500px;color:#ababab">Ask a question or make a request about data</div>
 <div class="t" style="left:37px;top:905.500px;color:#ababab">in a table</div>
 <div class="sm" style="left:37px;top:949px">0/2000</div>
 <svg class="abs" style="left:256px;top:945px" width="17" height="19" viewBox="0 0 17 19" fill="none" stroke="#333" stroke-width="1.300"><path d="M1 16.200V3A2.200 2.200 0 0 1 3.200.800h10.600A2.200 2.200 0 0 1 16 3v12.500H3.200A1.500 1.500 0 0 0 3.200 18.400H16" stroke-linejoin="round"/><rect x="4.500" y="3.800" width="8" height="2.600" rx=".6"/></svg>
 <div class="abs" style="left:282px;top:936px;width:1px;height:35px;background:#e0e0e0"></div>
 <svg class="abs" style="left:298px;top:943.500px" width="14" height="20" viewBox="0 0 14 20"><rect x="3.800" y=".500" width="6.400" height="11.500" rx="3.200" fill="#242424"/><path d="M1 9.500a6 6 0 0 0 12 0M7 15.500v4" stroke="#242424" stroke-width="1.300" fill="none"/></svg>
 <svg class="abs" style="left:333.500px;top:945.500px" width="20" height="18" viewBox="0 0 20 18" fill="none" stroke="#bdbdbd" stroke-width="1.200" stroke-linejoin="round"><path d="M1.200 1L19 9 1.200 17l3-8zM4.200 9H12"/></svg>
</div>
</body></html>
